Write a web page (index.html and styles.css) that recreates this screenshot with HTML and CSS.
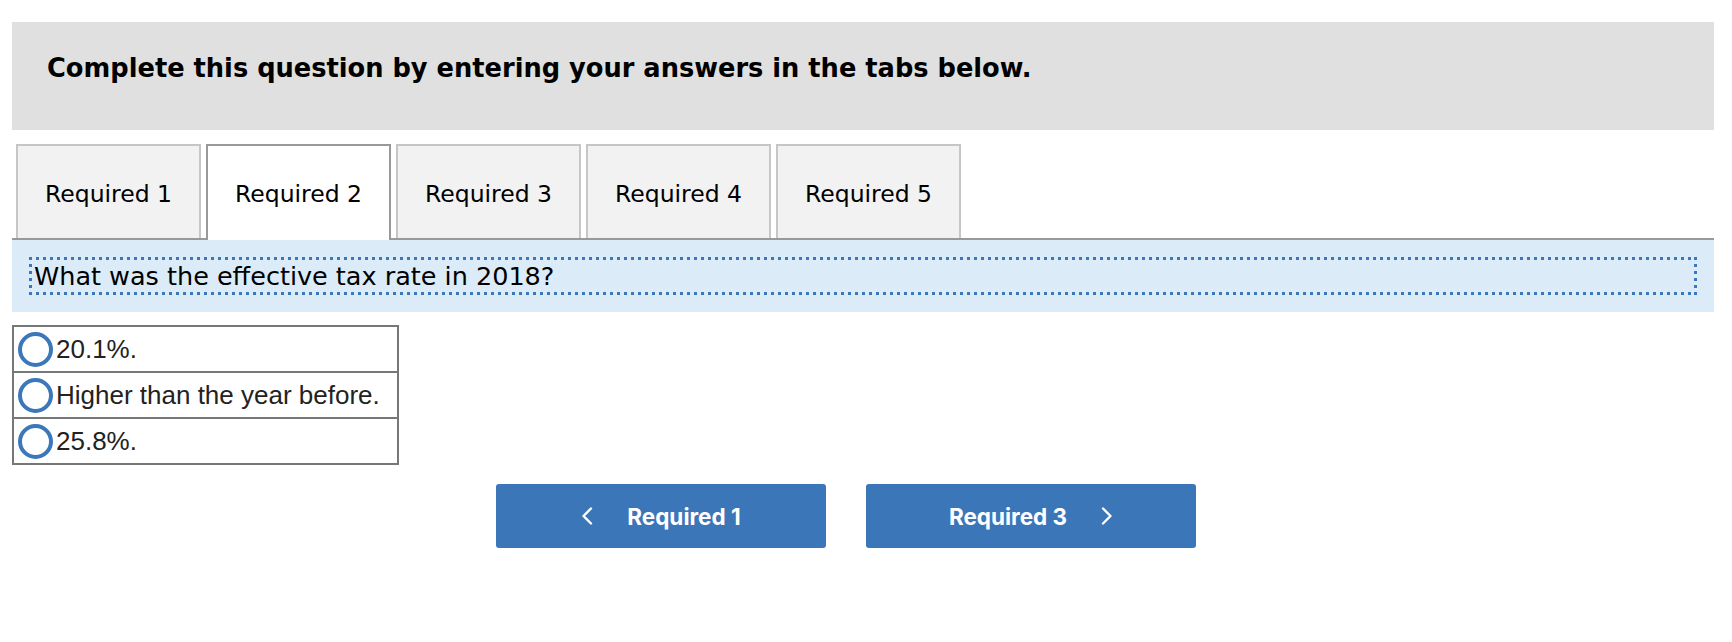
FILE: index.html
```html
<!DOCTYPE html>
<html lang="en">
<head>
    <meta charset="UTF-8">
    <meta name="viewport" content="width=device-width, initial-scale=1.0">
    <title>Required 2</title>
    <link rel="stylesheet" href="styles.css">
</head>
<body>
    <div class="page">
        <div class="intro">
            <h2>Complete this question by entering your answers in the tabs below.</h2>
        </div>

        <div class="tabs">
            <div class="tab">Required 1</div>
            <div class="tab active">Required 2</div>
            <div class="tab">Required 3</div>
            <div class="tab">Required 4</div>
            <div class="tab">Required 5</div>
        </div>

        <div class="prompt">
            <div class="prompt-box">What was the effective tax rate in 2018?</div>
        </div>

        <div class="choices">
            <label class="choice"><input type="radio" name="rate">20.1%.</label>
            <label class="choice"><input type="radio" name="rate">Higher than the year before.</label>
            <label class="choice"><input type="radio" name="rate">25.8%.</label>
        </div>

        <div class="nav">
            <button class="nav-btn">
                <svg width="12" height="18" viewBox="0 0 12 18"><polyline points="10,1.5 2.5,9 10,16.5" fill="none" stroke="#fff" stroke-width="2.4" stroke-linecap="round" stroke-linejoin="round"/></svg>
                Required 1
            </button>
            <button class="nav-btn">
                Required 3
                <svg width="12" height="18" viewBox="0 0 12 18"><polyline points="2,1.5 9.5,9 2,16.5" fill="none" stroke="#fff" stroke-width="2.4" stroke-linecap="round" stroke-linejoin="round"/></svg>
            </button>
        </div>
    </div>
</body>
</html>
```

FILE: styles.css
```css
body {
    margin: 0;
    padding: 0;
    background: #fff;
    font-family: "DejaVu Sans", Verdana, sans-serif;
    color: #000;
}

.page {
    width: 1702px;
    margin: 22px 0 0 12px;
}

.intro {
    background-color: #e0e0e0;
    padding: 31px 35px 47px;
}

.intro h2 {
    margin: 0;
    font-size: 25.7px;
    line-height: 30px;
    font-weight: bold;
}

.tabs {
    display: flex;
    gap: 5px;
    margin-top: 14px;
    padding-left: 4px;
    border-bottom: 2px solid #999;
}

.tab {
    box-sizing: border-box;
    width: 185px;
    height: 94px;
    padding-top: 3px;
    display: flex;
    align-items: center;
    justify-content: center;
    background-color: #f2f2f2;
    border: 2px solid #c6c6c6;
    border-bottom: none;
    font-size: 23.5px;
    cursor: pointer;
}

.tab.active {
    background-color: #fff;
    border-color: #999;
    height: 96px;
    padding-bottom: 2px;
    margin-bottom: -2px;
}

.prompt {
    background-color: #dbecf8;
    padding: 17px;
}

/* square dots, drawn by hand so they match the original focus box */
.prompt-box {
    padding: 3px 5px;
    font-size: 25.5px;
    line-height: 32px;
    background:
        repeating-linear-gradient(90deg, #3b77bb 0 3px, transparent 3px 7px) left top / 100% 3px no-repeat,
        repeating-linear-gradient(90deg, #3b77bb 0 3px, transparent 3px 7px) left bottom / 100% 3px no-repeat,
        repeating-linear-gradient(180deg, #3b77bb 0 3px, transparent 3px 7px) left top / 3px 100% no-repeat,
        repeating-linear-gradient(180deg, #3b77bb 0 3px, transparent 3px 7px) right top / 3px 100% no-repeat;
}

.choices {
    width: 387px;
    box-sizing: border-box;
    margin-top: 13px;
    border: 2px solid #777;
    font-family: "Liberation Sans", Arial, sans-serif;
    font-size: 26px;
    color: #222;
}

.choice {
    display: flex;
    align-items: center;
    gap: 3px;
    height: 44px;
    padding-left: 4px;
    cursor: pointer;
}

.choice + .choice {
    border-top: 2px solid #777;
}

.choice input {
    appearance: none;
    -webkit-appearance: none;
    box-sizing: border-box;
    width: 35px;
    height: 35px;
    margin: 0;
    border: 4px solid #3b77bb;
    border-radius: 50%;
    background: #fff;
}

.nav {
    display: flex;
    gap: 40px;
    margin-top: 19px;
    padding-left: 484px;
}

.nav-btn {
    width: 330px;
    height: 64px;
    display: flex;
    align-items: center;
    justify-content: center;
    gap: 34px;
    background-color: #3b76b8;
    color: #fff;
    border: none;
    border-radius: 3px;
    font-family: Inter, Roboto, sans-serif;
    font-size: 22.5px;
    font-weight: 700;
    cursor: pointer;
}
```
